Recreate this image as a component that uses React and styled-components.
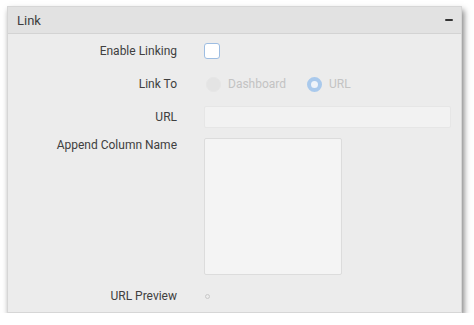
import styled, { createGlobalStyle } from "styled-components";

const GlobalStyle = createGlobalStyle`
  html, body {
    margin: 0;
    padding: 0;
    background: #ffffff;
    font-family: Roboto, "Liberation Sans", sans-serif;
  }
`;

const Page = styled.div`
  padding: 6px 12px 0 7px;
`;

const Panel = styled.div`
  width: 455px;
  height: 307px;
  box-sizing: border-box;
  background: #ececec;
  border: 1px solid #d6d6d6;
  box-shadow: 2px 4px 6px rgba(0, 0, 0, 0.5);
  display: flex;
  flex-direction: column;
`;

const Header = styled.div`
  height: 27px;
  box-sizing: border-box;
  background: #e2e2e2;
  border-bottom: 1px solid #d3d3d3;
  display: flex;
  align-items: center;
  justify-content: space-between;
  padding: 0 8px 0 9px;
  font-size: 13px;
  color: #3d3d3d;
`;

const Collapse = styled.span`
  width: 8px;
  height: 2px;
  background: #333;
  border-radius: 1px;
`;

const Body = styled.div`
  display: flex;
  flex-direction: column;
  padding-top: 9px;
`;

const Row = styled.div`
  display: grid;
  grid-template-columns: 169px 1fr;
  column-gap: 27px;
  align-items: ${(p) => (p.$top ? "start" : "center")};
  min-height: ${(p) => p.$h}px;
  margin-top: ${(p) => p.$mt || 0}px;
`;

const Label = styled.div`
  text-align: right;
  font-size: 12px;
  color: #404040;
  line-height: 16px;
  margin-top: ${(p) => (p.$top ? "-1px" : 0)};
`;

const Checkbox = styled.span`
  width: 14px;
  height: 14px;
  background: #fff;
  border: 1px solid #9dbde2;
  border-radius: 3px;
`;

const Radios = styled.div`
  display: flex;
  align-items: center;
`;

const Radio = styled.span`
  width: 15px;
  height: 15px;
  box-sizing: border-box;
  border-radius: 50%;
  background: ${(p) => (p.$on ? "#eef3f9" : "#e4e4e4")};
  border: ${(p) => (p.$on ? "4px solid #a9c9ec" : "1px solid #e6e6e6")};
  margin-left: ${(p) => p.$ml || 0}px;
  margin-right: 7px;
`;

const RadioText = styled.span`
  font-size: 12px;
  color: #c3c3c3;
`;

const Input = styled.div`
  width: 247px;
  height: 22px;
  box-sizing: border-box;
  background: #f2f2f2;
  border: 1px solid #e6e6e6;
  border-radius: 2px;
`;

const Area = styled.div`
  width: 138px;
  height: 137px;
  box-sizing: border-box;
  background: #f4f4f4;
  border: 1px solid #dcdcdc;
  border-radius: 2px;
`;

const Dot = styled.span`
  width: 3px;
  height: 3px;
  border: 1px solid #c9c9c9;
  border-radius: 50%;
  margin-left: 1px;
`;

const App = () => {
  return (
    <Page>
      <GlobalStyle />
      <Panel>
        <Header>
          <span>Link</span>
          <Collapse />
        </Header>
        <Body>
          <Row $h={16}>
            <Label>Enable Linking</Label>
            <Checkbox />
          </Row>
          <Row $h={16} $mt={17}>
            <Label>Link To</Label>
            <Radios>
              <Radio $ml={2} />
              <RadioText>Dashboard</RadioText>
              <Radio $on $ml={21} />
              <RadioText>URL</RadioText>
            </Radios>
          </Row>
          <Row $h={22} $mt={14}>
            <Label>URL</Label>
            <Input />
          </Row>
          <Row $h={137} $mt={10} $top>
            <Label $top>Append Column Name</Label>
            <Area />
          </Row>
          <Row $h={16} $mt={13}>
            <Label>URL Preview</Label>
            <Dot />
          </Row>
        </Body>
      </Panel>
    </Page>
  );
};

export default App;
